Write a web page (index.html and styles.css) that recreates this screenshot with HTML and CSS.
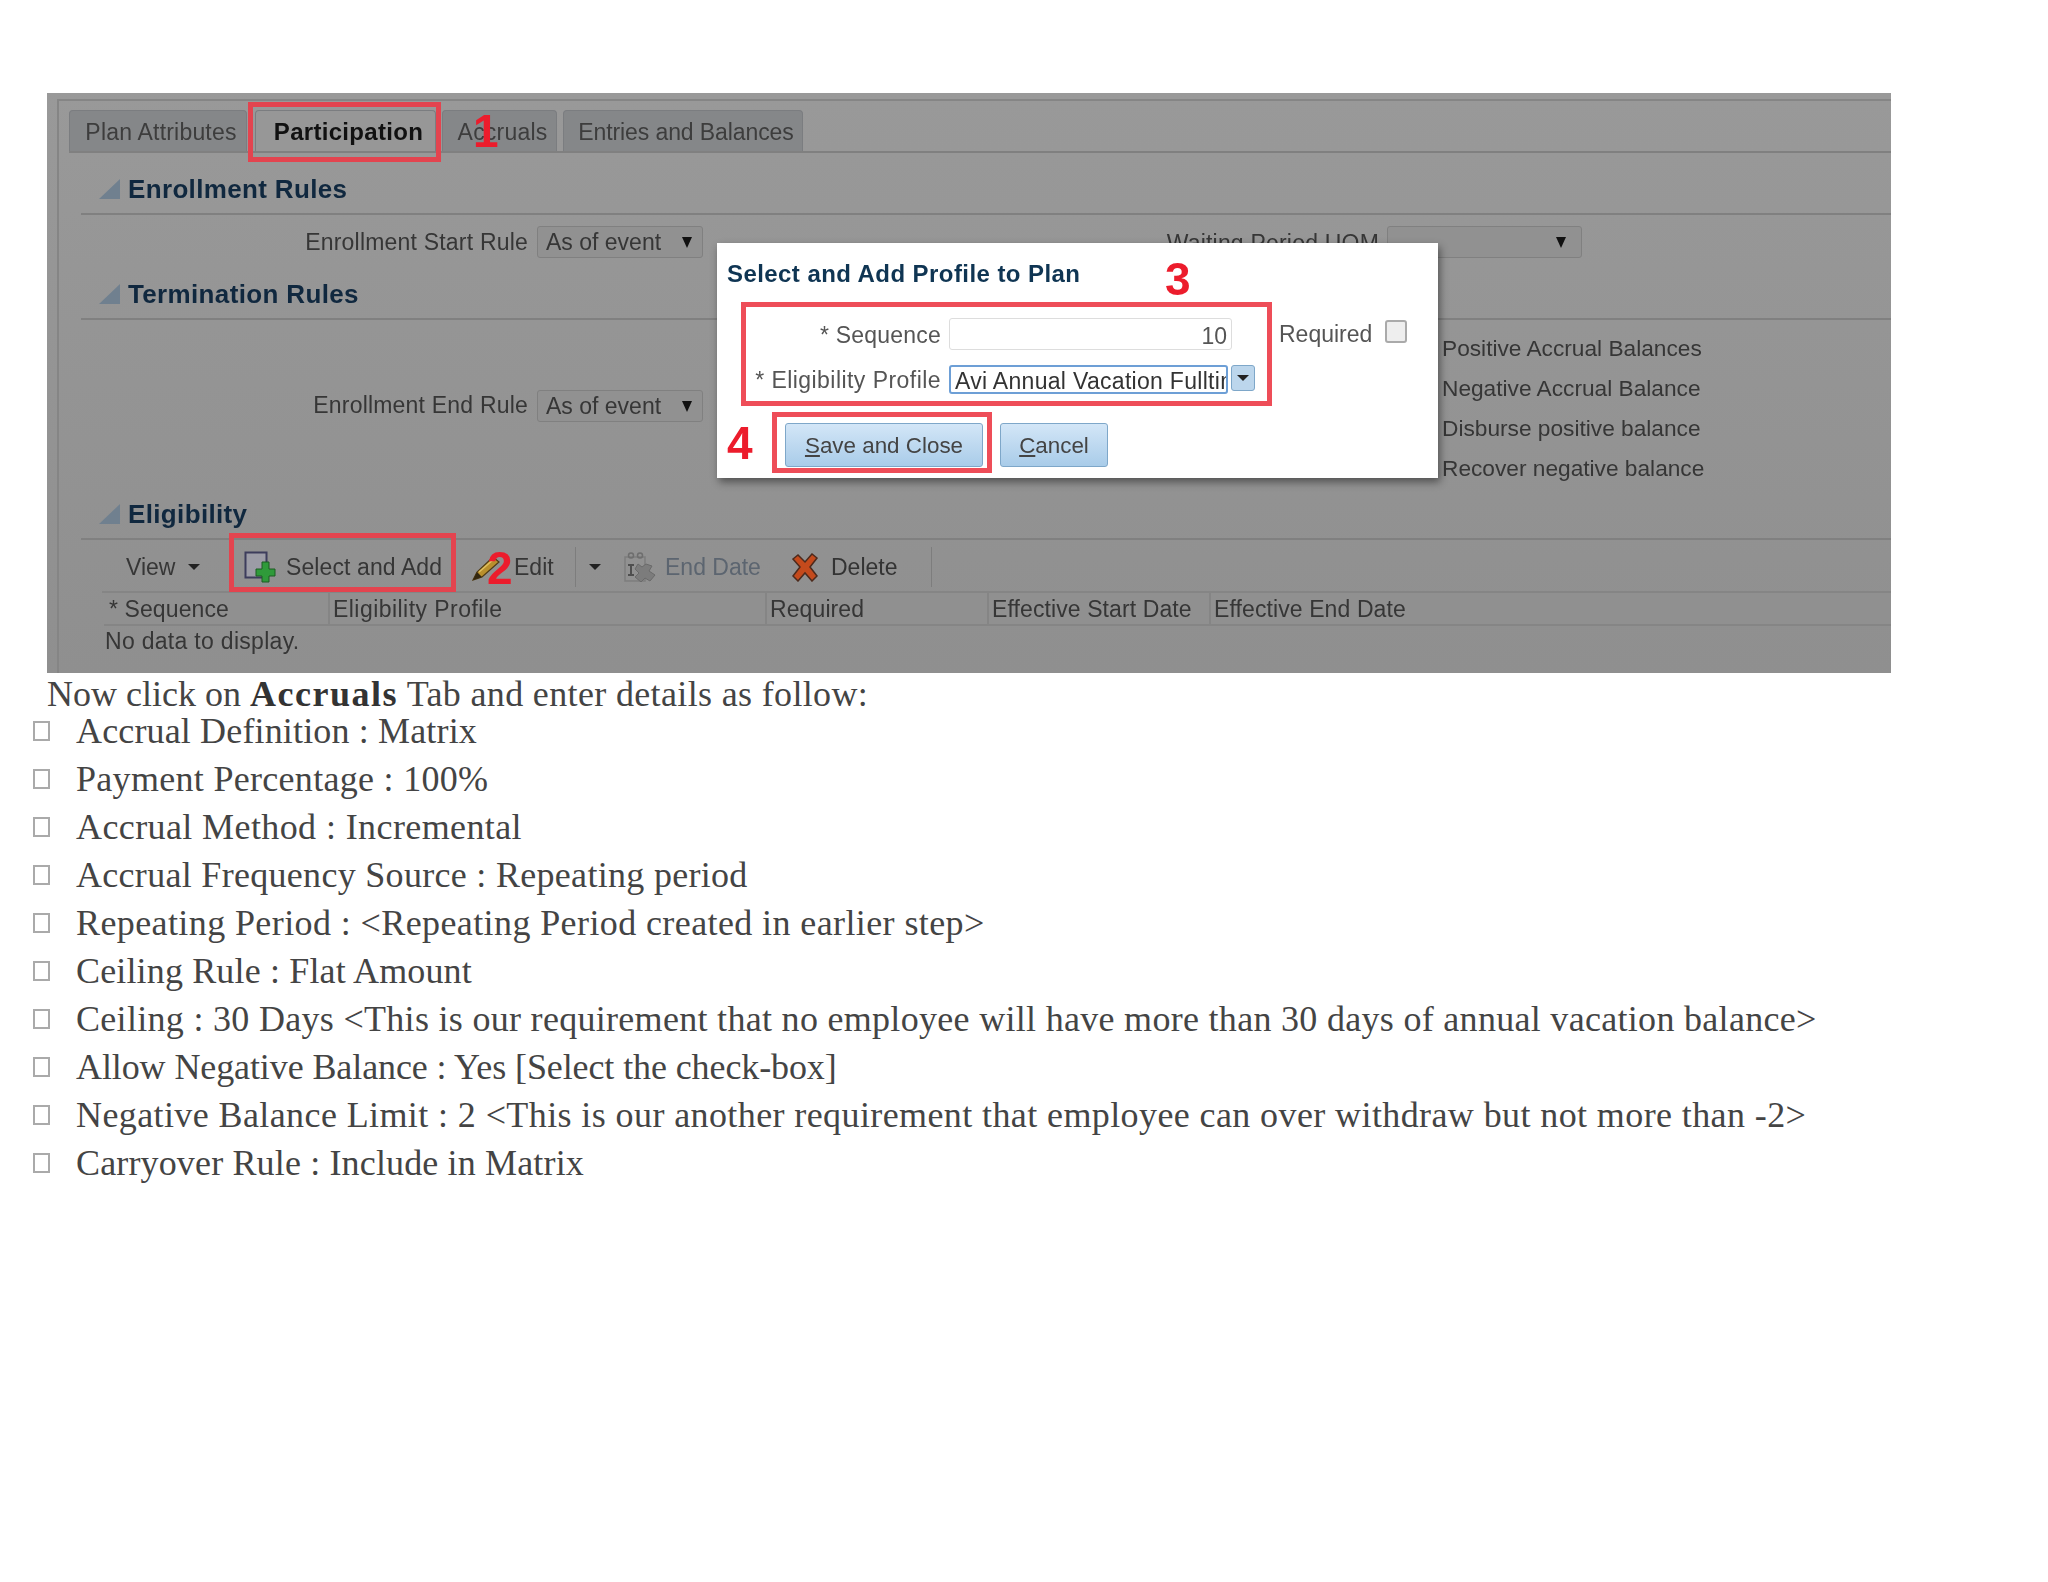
FILE: index.html
```html
<!DOCTYPE html>
<html lang="en">
<head>
  <meta charset="UTF-8" />
  <title>Accrual Plan Setup</title>
  <link rel="stylesheet" href="styles.css">
</head>
<body>
  <div class="shot">
    <div class="frame">
      <div class="tabs">
        <div class="tab">Plan Attributes</div>
        <div class="tab tab-active">Participation</div>
        <div class="tab tab-accruals">Accruals</div>
        <div class="tab tab-entries">Entries and Balances</div>
      </div>

      <div class="section-head"><span class="tri"></span>Enrollment Rules</div>
      <div class="form-row">
        <span class="form-label">Enrollment Start Rule</span>
        <span class="select">As of event<i class="arrow"></i></span>
        <span class="form-label waiting">Waiting Period UOM</span>
        <span class="select select-wide"><i class="arrow"></i></span>
      </div>

      <div class="section-head head-term"><span class="tri"></span>Termination Rules</div>
      <div class="form-row term-row">
        <span class="form-label">Enrollment End Rule</span>
        <span class="select">As of event<i class="arrow"></i></span>
        <div class="options">
          <span>Positive Accrual Balances</span>
          <span>Negative Accrual Balance</span>
          <span>Disburse positive balance</span>
          <span>Recover negative balance</span>
        </div>
      </div>

      <div class="section-head head-elig"><span class="tri"></span>Eligibility</div>
      <div class="toolbar">
        <span class="tool-view">View</span>
        <i class="small-arrow"></i>
        <span class="tool-sep sep-view"></span>
        <svg class="icon icon-add" viewBox="0 0 32 32">
          <rect x="1.5" y="1.5" width="21" height="25" fill="#9c9ca6" stroke="#3d3d5c" stroke-width="2"/>
          <path d="M18 11h7v7h6v7h-6v6h-7v-6h-6v-7h6z" fill="#2f9a3a" stroke="#1c5c22" stroke-width="1"/>
        </svg>
        <span class="tool-add">Select and Add</span>
        <svg class="icon icon-pencil" viewBox="0 0 28 26">
          <path d="M1 25l4-8L21 2l6 5-17 15z" fill="#b98f2c" stroke="#4f3a14" stroke-width="1.2"/>
          <path d="M1 25l4-8 5 5z" fill="#33270f"/>
          <path d="M7 17L22 4" stroke="#e0c060" stroke-width="1.6"/>
        </svg>
        <span class="tool-edit">Edit</span>
        <span class="tool-sep sep-edit"></span>
        <i class="small-arrow arrow-edit"></i>
        <svg class="icon icon-date" viewBox="0 0 32 30">
          <rect x="1" y="5" width="20" height="24" fill="none" stroke="#7d7d7d" stroke-width="1.5"/>
          <circle cx="7" cy="3.5" r="2.5" fill="none" stroke="#6e6e6e" stroke-width="1.5"/>
          <circle cx="16" cy="3.5" r="2.5" fill="none" stroke="#6e6e6e" stroke-width="1.5"/>
          <path d="M4 12h6v2H8v8h2v2H4v-2h2v-8H4z" fill="#4f4f4f"/>
          <path d="M14 12l4 3 4-3 6 2-3 5 6 4-5 6-5-3-4 4-6-5 4-4-4-4z" fill="#7c7c7c" stroke="#6a6a6a"/>
        </svg>
        <span class="tool-disabled">End Date</span>
        <svg class="icon icon-delete" viewBox="0 0 28 29">
          <path d="M2 6l5-4 7 7 7-8 5 4-7 9 7 9-5 5-7-8-7 8-5-5 7-9z" fill="#c44a1c" stroke="#4d2a1c" stroke-width="1.5"/>
        </svg>
        <span class="tool-delete">Delete</span>
        <span class="tool-sep sep-end"></span>
      </div>
      <div class="table-head">
        <span>* Sequence</span>
        <span class="col-profile">Eligibility Profile</span>
        <span>Required</span>
        <span>Effective Start Date</span>
        <span>Effective End Date</span>
      </div>
      <div class="no-data">No data to display.</div>
    </div>

    <div class="dialog">
      <div class="dialog-title">Select and Add Profile to Plan</div>
      <div class="dialog-body">
        <div class="dialog-form">
          <label class="label-seq">* Sequence</label>
          <span class="input input-num">10</span>
          <label>* Eligibility Profile</label>
          <span class="combo"><span class="input input-focus">Avi Annual Vacation Fulltime</span><span class="combo-btn"><i class="small-arrow"></i></span></span>
        </div>
        <span class="req-label">Required</span>
        <span class="checkbox"></span>
      </div>
      <div class="dialog-buttons">
        <span class="btn btn-save"><u>S</u>ave and Close</span>
        <span class="btn btn-cancel"><u>C</u>ancel</span>
      </div>
    </div>

    <div class="mark mark-1"></div>
    <div class="mark mark-2"></div>
    <div class="mark mark-3"></div>
    <div class="mark mark-4"></div>
    <span class="num num-1">1</span>
    <span class="num num-2">2</span>
    <span class="num num-3">3</span>
    <span class="num num-4">4</span>
  </div>

  <p class="intro"><span class="lead">Now click on </span><b>Accruals</b> Tab and enter details as follow:</p>
  <ul class="details">
    <li class="tight"><span class="bullet"></span>Accrual Definition : Matrix</li>
    <li><span class="bullet"></span>Payment Percentage : 100%</li>
    <li class="wide"><span class="bullet"></span>Accrual Method : Incremental</li>
    <li><span class="bullet"></span>Accrual Frequency Source : Repeating period</li>
    <li class="wide"><span class="bullet"></span>Repeating Period : &lt;Repeating Period created in earlier step&gt;</li>
    <li class="tight"><span class="bullet"></span>Ceiling Rule : Flat Amount</li>
    <li><span class="bullet"></span>Ceiling : 30 Days &lt;This is our requirement that no employee will have more than 30 days of annual vacation balance&gt;</li>
    <li class="tighter"><span class="bullet"></span>Allow Negative Balance : Yes [Select the check-box]</li>
    <li class="wide"><span class="bullet"></span>Negative Balance Limit : 2 &lt;This is our another requirement that employee can over withdraw but not more than -2&gt;</li>
    <li class="tight"><span class="bullet"></span>Carryover Rule : Include in Matrix</li>
  </ul>
</body>
</html>
```

FILE: styles.css
```css
body {
  margin: 0;
  background-color: #fff;
  font-family: "Liberation Serif", serif;
}

.shot {
  position: relative;
  width: 1844px;
  height: 580px;
  margin: 93px 0 0 47px;
  overflow: hidden;
  background: linear-gradient(#999, #8f8f8f);
  font-family: "Liberation Sans", sans-serif;
  font-size: 23px;
  color: #363636;
  filter: blur(0.4px);
}

.frame {
  height: 574px;
  margin: 6px 0 0 10px;
  padding-left: 10px;
  border-left: 2px solid #858585;
  border-top: 2px solid #858585;
  box-sizing: border-box;
}

.tabs {
  display: flex;
  gap: 6px;
  height: 41px;
  margin-top: 9px;
  border-bottom: 2px solid #808080;
}

.tab {
  width: 178px;
  height: 41px;
  padding-left: 6px;
  line-height: 42px;
  text-align: center;
  background-color: #858789;
  border: 1px solid #7b7d80;
  border-bottom: none;
  border-radius: 4px 4px 0 0;
  box-sizing: border-box;
  color: #3d3d3d;
  letter-spacing: 0.2px;
}

.tab-active {
  width: 181px;
  margin-left: 2px;
  background-color: #979797;
  color: #111;
  font-size: 24px;
  font-weight: bold;
  letter-spacing: 0.3px;
}

.tab-accruals {
  width: 115px;
}

.tab-entries {
  width: 240px;
  letter-spacing: -0.1px;
}

.section-head {
  display: flex;
  align-items: center;
  height: 50px;
  margin: 12px 0 0 12px;
  padding-left: 18px;
  border-bottom: 2px solid #808080;
  box-sizing: border-box;
  font-size: 26px;
  font-weight: bold;
  letter-spacing: 0.35px;
  color: #10283f;
}

.head-elig {
  margin-top: 0;
}

.tri {
  width: 0;
  height: 0;
  margin-right: 8px;
  border-bottom: 20px solid #70808f;
  border-left: 21px solid transparent;
}

.form-row {
  display: flex;
  align-items: center;
  height: 32px;
  margin: 11px 0 0 12px;
}

.form-label {
  width: 447px;
  margin-right: 9px;
  text-align: right;
  white-space: nowrap;
  letter-spacing: 0.2px;
}

.waiting {
  position: relative;
  top: 1px;
  width: 676px;
  margin-right: 8px;
}

.select {
  display: flex;
  align-items: center;
  justify-content: space-between;
  width: 166px;
  height: 32px;
  padding: 0 10px 0 8px;
  background-color: #919191;
  border: 1px solid #808080;
  border-radius: 3px;
  box-sizing: border-box;
}

.select-wide {
  width: 195px;
  padding-right: 15px;
  justify-content: flex-end;
}

.arrow {
  width: 0;
  height: 0;
  border-top: 11px solid #111;
  border-left: 5px solid transparent;
  border-right: 5px solid transparent;
}

.term-row {
  align-items: flex-start;
  height: 170px;
  margin-top: 0;
}

.term-row .form-label {
  margin-top: 72px;
}

.term-row .select {
  margin-top: 70px;
}

.options {
  display: flex;
  flex-direction: column;
  gap: 10px;
  margin: 13px 0 0 739px;
  font-size: 22.7px;
  line-height: 30px;
  white-space: nowrap;
}

.toolbar {
  display: flex;
  align-items: center;
  height: 50px;
  margin: 3px 0 0 33px;
  padding-left: 24px;
  border-bottom: 2px solid #858585;
  box-sizing: border-box;
  white-space: nowrap;
}

.small-arrow {
  display: inline-block;
  width: 0;
  height: 0;
  border-top: 6px solid #222;
  border-left: 6px solid transparent;
  border-right: 6px solid transparent;
}

.toolbar > .small-arrow {
  margin-left: 14px;
}

.toolbar .arrow-edit {
  margin-left: 13px;
}

.tool-view {
  width: 48px;
}

.tool-sep {
  width: 1px;
  height: 40px;
  background-color: #7d7d7d;
}

.sep-view {
  margin-left: 29px;
}

.icon {
  flex: none;
}

.icon-add {
  width: 32px;
  height: 32px;
  margin: 0 10px 0 14px;
}

.tool-add {
  width: 155px;
  letter-spacing: 0.1px;
}

.icon-pencil {
  width: 28px;
  height: 26px;
  margin: 2px 0 0 31px;
}

.tool-edit {
  width: 41px;
  margin-left: 14px;
}

.sep-edit {
  margin-left: 20px;
}

.icon-date {
  width: 32px;
  height: 30px;
  margin: 0 9px 0 23px;
}

.tool-disabled {
  width: 96px;
  color: #5c6570;
}

.icon-delete {
  width: 28px;
  height: 29px;
  margin: 0 12px 0 30px;
}

.tool-delete {
  width: 64px;
  color: #333;
}

.sep-end {
  margin-left: 36px;
}

.table-head {
  display: grid;
  grid-template-columns: 224px 437px 222px 222px 1fr;
  height: 33px;
  margin-left: 35px;
  line-height: 33px;
  background-color: #909090;
  border-bottom: 2px solid #858585;
  box-sizing: border-box;
  white-space: nowrap;
  letter-spacing: 0.1px;
}

.table-head span {
  padding-left: 3px;
  border-left: 2px solid #858585;
}

.table-head span:first-child {
  padding-left: 5px;
  border-left: none;
}

.table-head .col-profile {
  letter-spacing: 0.45px;
}

.no-data {
  margin: 2px 0 0 36px;
  line-height: 26px;
  letter-spacing: 0.3px;
}

/* the popup and the red marks lie over the dimmed page */
.dialog {
  position: absolute;
  left: 670px;
  top: 150px;
  width: 721px;
  height: 235px;
  background-color: #fff;
  box-shadow: 2px 4px 8px rgba(0, 0, 0, 0.45);
  color: #555;
  font-size: 23px;
}

.dialog-title {
  height: 60px;
  padding-left: 10px;
  line-height: 62px;
  font-size: 24px;
  font-weight: bold;
  letter-spacing: 0.43px;
  color: #0f3553;
}

.dialog-body {
  display: flex;
  align-items: flex-start;
  margin-top: 15px;
}

.dialog-form {
  display: grid;
  grid-template-columns: 224px 283px;
  column-gap: 8px;
  row-gap: 14px;
  align-items: center;
}

.dialog-form label {
  padding-top: 3px;
  text-align: right;
  white-space: nowrap;
  letter-spacing: 0.45px;
}

.dialog-form .label-seq {
  letter-spacing: 0.2px;
}

.input {
  display: block;
  height: 32px;
  padding: 0 4px;
  line-height: 34px;
  background-color: #fff;
  border: 1px solid #ddd;
  border-radius: 3px;
  box-sizing: border-box;
  white-space: nowrap;
  overflow: hidden;
}

.input-num {
  text-align: right;
}

.combo {
  display: flex;
  gap: 3px;
  width: 306px;
}

.input-focus {
  width: 279px;
  height: 29px;
  line-height: 28px;
  border: 2px solid #6d9fd6;
  color: #333;
  letter-spacing: 0.3px;
}

.combo-btn {
  display: flex;
  align-items: center;
  justify-content: center;
  width: 24px;
  height: 26px;
  background-color: #bcd6ec;
  border: 1px solid #7ea7c9;
  border-radius: 3px;
  box-sizing: border-box;
}

.req-label {
  margin-left: 47px;
  line-height: 32px;
}

.checkbox {
  width: 22px;
  height: 23px;
  margin: 2px 0 0 13px;
  background-color: #eee;
  border: 2px solid #aaa;
  border-radius: 3px;
  box-sizing: border-box;
}

.dialog-buttons {
  display: flex;
  gap: 17px;
  margin: 29px 0 0 68px;
}

.btn {
  height: 44px;
  line-height: 43px;
  text-align: center;
  font-size: 22.4px;
  background: linear-gradient(#d3e6f7, #a9cce9);
  border: 1px solid #7ea7c9;
  border-radius: 3px;
  box-sizing: border-box;
  color: #444;
}

.btn-save {
  width: 198px;
}

.btn-cancel {
  width: 108px;
}

.mark {
  position: absolute;
  border: 5px solid #e3444f;
  box-sizing: border-box;
}

.mark-1 {
  left: 201px;
  top: 9px;
  width: 193px;
  height: 60px;
}

.mark-2 {
  left: 182px;
  top: 440px;
  width: 227px;
  height: 59px;
}

.mark-3 {
  left: 694px;
  top: 209px;
  width: 531px;
  height: 104px;
  border-color: #ee4d58;
}

.mark-4 {
  left: 725px;
  top: 319px;
  width: 220px;
  height: 61px;
  border-color: #ee4d58;
}

.num {
  position: absolute;
  font-size: 46px;
  line-height: 46px;
  font-weight: bold;
  color: #ec1c2c;
}

.num-1 {
  left: 426px;
  top: 15px;
}

.num-2 {
  left: 440px;
  top: 452px;
}

.num-3 {
  left: 1118px;
  top: 163px;
}

.num-4 {
  left: 680px;
  top: 327px;
}

.intro {
  margin: 0 0 -8px 47px;
  font-size: 36px;
  line-height: 42px;
  letter-spacing: 0.35px;
  color: #444;
}

.intro .lead {
  letter-spacing: 0;
}

.intro b {
  letter-spacing: 1.5px;
  color: #333;
}

.details {
  list-style: none;
  margin: 0;
  padding: 0;
}

.details li {
  display: flex;
  align-items: center;
  height: 48px;
  font-size: 36px;
  letter-spacing: 0.3px;
  color: #444;
  white-space: nowrap;
}

.details .tight {
  letter-spacing: 0.15px;
}

.details .tighter {
  letter-spacing: -0.1px;
}

.details .wide {
  letter-spacing: 0.4px;
}

.bullet {
  flex: none;
  width: 17px;
  height: 20px;
  margin: 0 26px 0 33px;
  border: 2px solid #aaa;
  box-sizing: border-box;
}
```
